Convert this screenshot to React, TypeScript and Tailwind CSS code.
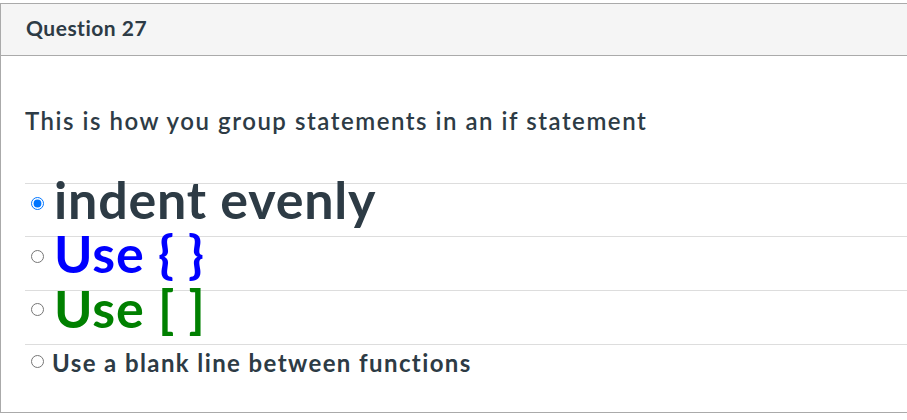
import React from "react";

type Answer = {
    text: string;
    row: string;
    label: string;
    radio: string;
    checked?: boolean;
};

const answers: Answer[] = [
    {
        text: "indent evenly",
        row: "h-[53px] text-[#2d3b45]",
        label: "-mt-[11px] pl-[2px] text-[52px] leading-[52px] tracking-[0.8px]",
        radio: "mt-[13px]",
        checked: true,
    },
    {
        text: "Use { }",
        row: "h-[54px] text-[#0000ff]",
        label: "-mt-[10px] pl-[2px] text-[52px] leading-[52px] tracking-[0.8px]",
        radio: "mt-[13px]",
    },
    {
        text: "Use [ ]",
        row: "h-[54px] text-[#008000]",
        label: "-mt-[9px] pl-[2px] text-[52px] leading-[52px] tracking-[0.8px]",
        radio: "mt-[12px]",
    },
    {
        text: "Use a blank line between functions",
        row: "h-[40px] pt-[1px] text-[#2d3b45]",
        label: "text-[24px] leading-[33px] tracking-[1.4px]",
        radio: "mt-[9px]",
    },
];

export default function App() {
    return (
        <div className="w-[907px] h-[420px] overflow-hidden bg-white pt-[3px] font-['Lato',sans-serif]">
            <div className="w-[907px] border-l border-y border-[#aaa]">
                <div className="h-[52px] bg-[#f5f5f5] border-b border-[#aaa] px-[25px] pb-[4px] flex items-center">
                    <h2 className="text-[21px] leading-[30px] tracking-[0.5px] font-bold text-[#2d3b45]">
                        Question 27
                    </h2>
                </div>

                <div className="pl-[24px] pb-[28px]">
                    <p className="pt-[48px] pb-[46px] text-[24px] leading-[33px] tracking-[1.53px] font-semibold text-[#2d3b45]">
                        This is how you group statements in an if statement
                    </p>

                    <div>
                        {answers.map((a) => (
                            <label
                                key={a.text}
                                className={`flex items-start border-t border-[#ddd] font-bold ${a.row}`}
                            >
                                <span className={`w-[27px] shrink-0 flex justify-start pl-[6px] ${a.radio}`}>
                                    <input
                                        type="radio"
                                        name="q27"
                                        defaultChecked={a.checked}
                                        className="m-0 w-[13px] h-[13px]"
                                    />
                                </span>
                                <span className={`whitespace-pre ${a.label}`}>{a.text}</span>
                            </label>
                        ))}
                    </div>
                </div>
            </div>
        </div>
    );
}
